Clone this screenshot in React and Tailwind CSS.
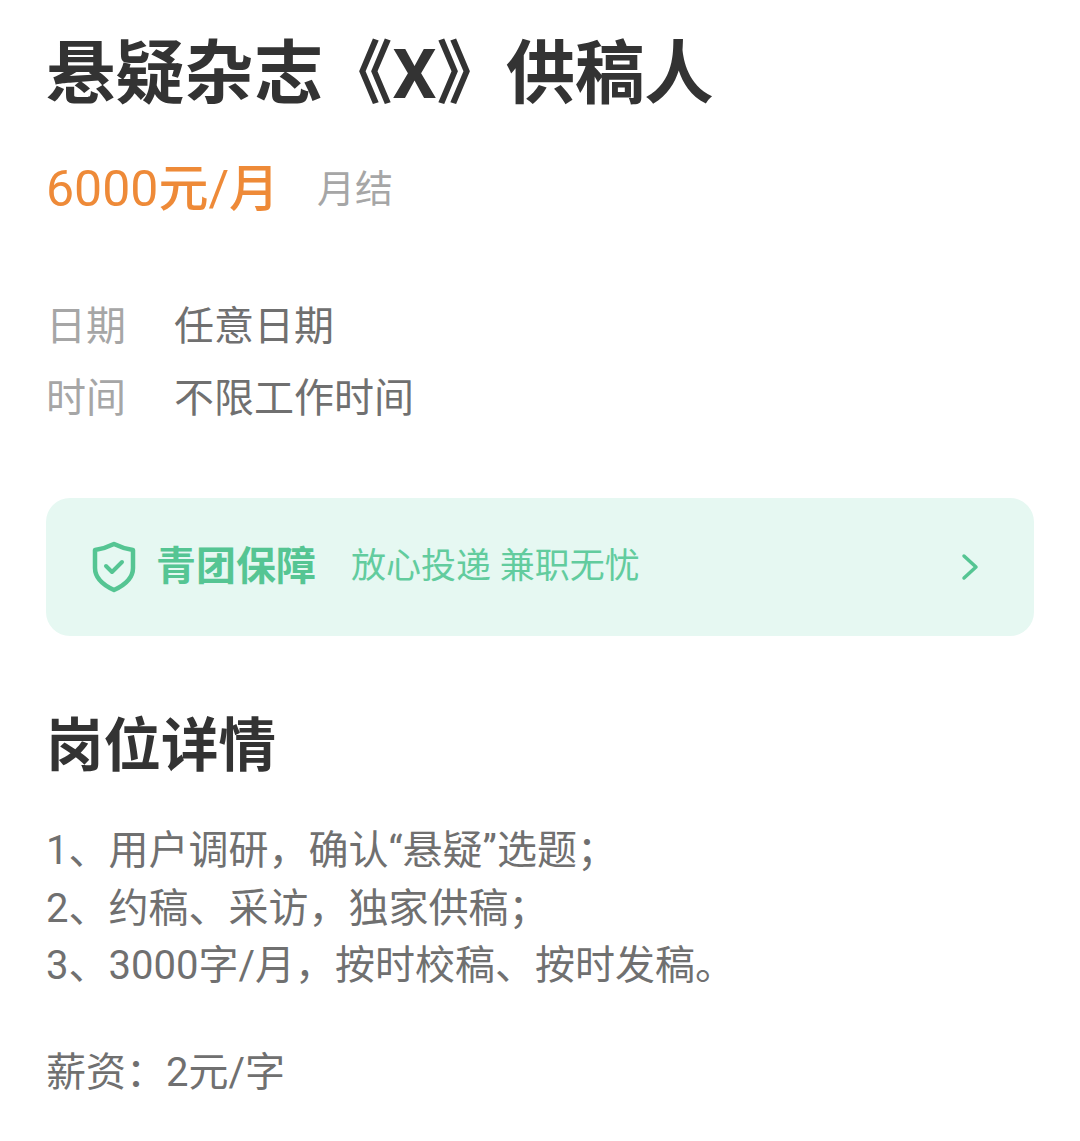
export default function App() {
  return (
    <div className="w-[1080px] h-[1141px] bg-white overflow-hidden font-['Roboto','Noto_Sans_CJK_SC',sans-serif] px-[46px] pt-[35px]">
      <h1 className="text-[69.3px] leading-[80px] font-bold text-[#333333] whitespace-nowrap">悬疑杂志《X》供稿人</h1>
      <div className="flex items-center mt-[44px] h-[60px]">
        <span className="text-[50px] leading-[60px] text-[#ee8a38] whitespace-nowrap">6000<span className="font-medium">元</span>/<span className="font-medium">月</span></span>
        <span className="text-[38px] leading-[60px] text-[#a6a6a6] ml-[38px]">月结</span>
      </div>
      <div className="mt-[80px] grid grid-cols-[128px_1fr] gap-y-[16px] text-[40px] leading-[56px]">
        <span className="text-[#a6a6a6]">日期</span><span className="text-[#707070]">任意日期</span>
        <span className="text-[#a6a6a6]">时间</span><span className="text-[#707070]">不限工作时间</span>
      </div>
      <div className="mt-[71px] h-[138px] rounded-[24px] bg-[#e6f8f2] flex items-center pl-[46px] pr-[55px]">
        <svg width="44" height="52" viewBox="0 0 44 52" fill="none" stroke="#55c593" strokeWidth="4.5" strokeLinejoin="round" strokeLinecap="round">
          <path d="M22 3 C28 6 34 8 41 9 V27 C41 37 33 44 22 49 C11 44 3 37 3 27 V9 C10 8 16 6 22 3 Z" />
          <path d="M14 25 L20 31 L30 21" strokeWidth="4" />
        </svg>
        <span className="ml-[20px] text-[40px] font-bold text-[#55c593] whitespace-nowrap">青团保障</span>
        <span className="ml-[35px] text-[35px] text-[#62cc9e] whitespace-nowrap">放心投递 兼职无忧</span>
        <svg className="ml-auto" width="18" height="28" viewBox="0 0 18 28" fill="none" stroke="#55c593" strokeWidth="3.5" strokeLinecap="round" strokeLinejoin="round">
          <path d="M3 3 L15 14 L3 25" />
        </svg>
      </div>
      <h2 className="mt-[73px] text-[57.5px] leading-[76px] font-bold text-[#333333]">岗位详情</h2>
      <div className="mt-[37px] text-[40px] leading-[57.5px] text-[#707070] whitespace-nowrap">
        <p>1、用户调研，确认“悬疑”选题；</p>
        <p>2、约稿、采访，独家供稿；</p>
        <p>3、3000字/月，按时校稿、按时发稿。</p>
        <p className="mt-[49px]">薪资：2元/字</p>
      </div>
    </div>
  );
}
